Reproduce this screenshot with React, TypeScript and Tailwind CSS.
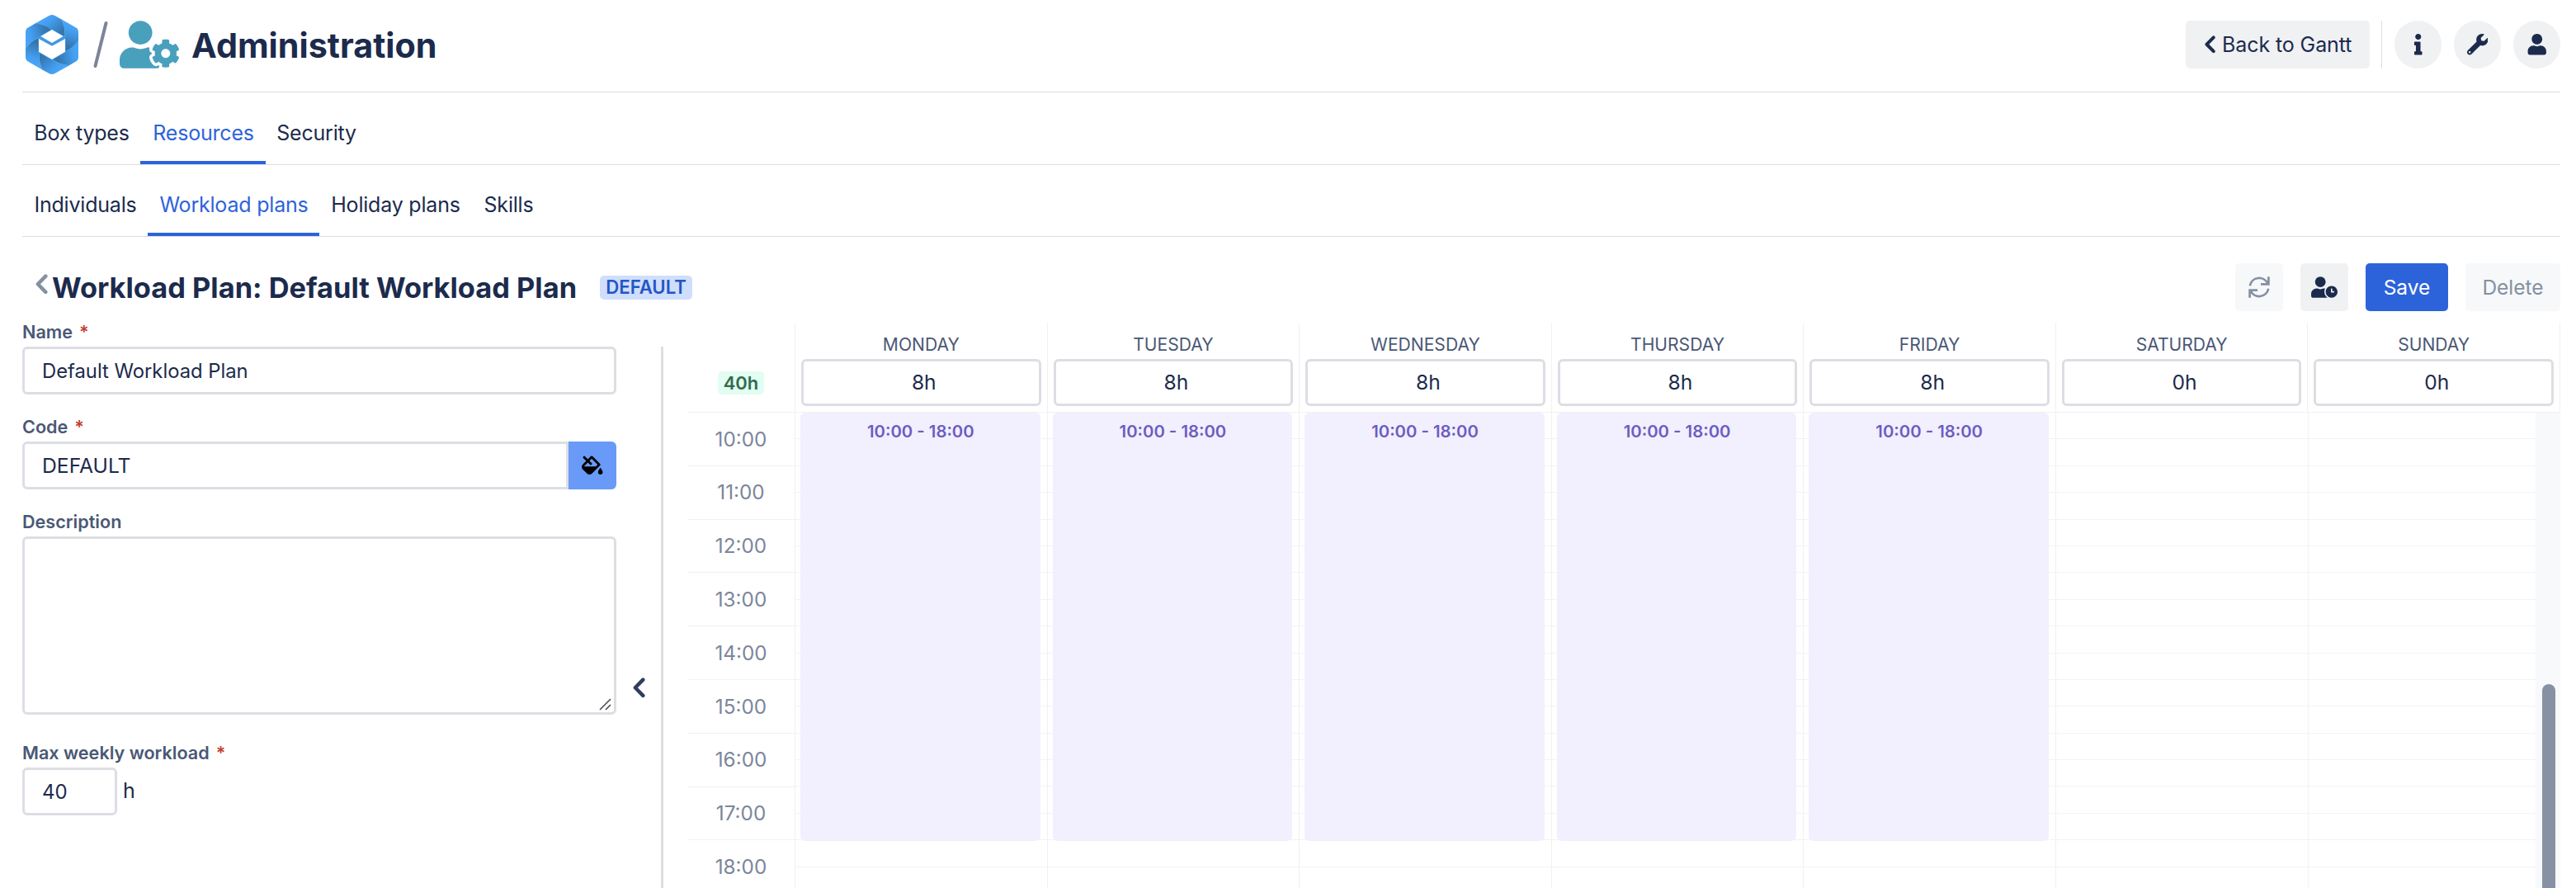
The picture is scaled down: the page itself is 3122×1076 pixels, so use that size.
import React from "react";
import { FaFillDrip, FaInfo, FaUser, FaUserClock, FaUserCog, FaWrench } from "react-icons/fa";

const DAYS = [
  { name: "MONDAY", hours: "8h", event: "10:00 - 18:00" },
  { name: "TUESDAY", hours: "8h", event: "10:00 - 18:00" },
  { name: "WEDNESDAY", hours: "8h", event: "10:00 - 18:00" },
  { name: "THURSDAY", hours: "8h", event: "10:00 - 18:00" },
  { name: "FRIDAY", hours: "8h", event: "10:00 - 18:00" },
  { name: "SATURDAY", hours: "0h", event: "" },
  { name: "SUNDAY", hours: "0h", event: "" },
];

const TIMES = ["10:00", "11:00", "12:00", "13:00", "14:00", "15:00", "16:00", "17:00", "18:00"];
const HALF_HOURS = Array.from({ length: 18 }, (_, i) => i);
const BLADES = [0, 60, 120, 180, 240, 300];

function Logo() {
  return (
    <svg width="64" height="72" viewBox="93 54 192 216" className="shrink-0">
      <defs>
        <linearGradient id="blade" gradientUnits="userSpaceOnUse" x1="165" y1="62" x2="218" y2="122">
          <stop offset="0" stopColor="#4ba6f8" />
          <stop offset="0.3" stopColor="#449dee" />
          <stop offset="1" stopColor="#3476ae" />
        </linearGradient>
        <clipPath id="hex">
          <path d="M178 57 Q189 51 200 57 L276 100 Q285 106 285 117 L285 207 Q285 218 276 224 L200 267 Q189 273 178 267 L102 224 Q93 218 93 207 L93 117 Q93 106 102 100 Z" />
        </clipPath>
      </defs>
      <g clipPath="url(#hex)">
        {BLADES.map((a) => (
          <path
            key={a}
            transform={`rotate(${a} 189 162)`}
            d="M124 86 L189 50 L224 70 Q239 98 236 135 L189 108 Q160 88 124 86 Z"
            fill="url(#blade)"
            stroke="#5fa9e6"
            strokeWidth="1"
          />
        ))}
      </g>
      <path d="M189 106 L239 134 L239 190 L189 218 L139 190 L139 134 Z" fill="#4198e4" />
      <path d="M189 108 L230 132 L189 156 L148 132 Z" fill="#fff" />
      <path d="M141 141 L189 167 L237 141 L237 188 L189 216 L141 188 Z" fill="#fff" />
    </svg>
  );
}

function ChevronLeft({ className }: { className: string }) {
  return (
    <svg viewBox="0 0 15 25" fill="none" className={className} stroke="currentColor" strokeWidth="4.6" strokeLinecap="round" strokeLinejoin="round">
      <path d="M12.4 2.7 L2.8 12.5 L12.4 22.3" />
    </svg>
  );
}

function RefreshIcon() {
  return (
    <svg width="26" height="26" viewBox="0 0 26 26" fill="none" stroke="#8590a2" strokeWidth="2.7">
      <path d="M1.8 11.2 A11.4 11.4 0 0 1 23.4 8.6" />
      <path d="M24.4 0.2 V9.4 H15" />
      <path d="M24.2 14.8 A11.4 11.4 0 0 1 2.6 17.4" />
      <path d="M1.6 25.8 V16.6 H11" />
    </svg>
  );
}

function Tab({ label, width, active }: { label: string; width: string; active?: boolean }) {
  return (
    <div
      className={`flex h-full items-center justify-center border-b-4 pt-[16px] pl-px text-[25px] tracking-[-0.2px] whitespace-nowrap ${width} ${
        active ? "border-[#2d63da] text-[#2d63da]" : "border-transparent"
      }`}
    >
      {label}
    </div>
  );
}

function Label({ children, required }: { children: string; required?: boolean }) {
  return (
    <div className="flex h-[36px] items-center gap-[8px] text-[21.6px] leading-[34px] font-semibold text-[#4a5875]">
      <span className="-mt-px">{children}</span>
      {required && <span className="text-[#c0402f]">*</span>}
    </div>
  );
}

function CircleButton({ children }: { children: React.ReactNode }) {
  return (
    <button className="flex h-[58px] w-[57px] items-center justify-center rounded-full bg-[#f0f1f3] text-[25.5px]">
      {children}
    </button>
  );
}

function Header() {
  return (
    <header className="flex h-[112px] items-start justify-between border-b border-[#dcdde1]">
      <div className="flex h-[108px] items-center pl-[4px]">
        <Logo />
        <svg width="20" height="58" viewBox="0 0 20 58" className="ml-[17px] shrink-0">
          <path d="M16.5 3 L3.5 55" stroke="#7c849a" strokeWidth="4" strokeLinecap="round" />
        </svg>
        <FaUserCog className="ml-[13px] h-[58px] w-[72px] text-[#49a0bc]" />
        <h1 className="ml-[15px] pt-[3px] text-[41.3px] font-bold whitespace-nowrap">Administration</h1>
      </div>
      <div className="flex items-center pt-[25px]">
        <button className="flex h-[58px] w-[223px] items-center rounded-[5px] bg-[#f0f1f3] pl-[23px] text-[25px] tracking-[-0.1px] whitespace-nowrap">
          <ChevronLeft className="mr-[8px] h-[21.5px] w-[13px]" />
          <span className="pt-px">Back to Gantt</span>
        </button>
        <div className="mr-[15px] ml-[14px] h-[58px] w-px bg-[#dcdde1]" />
        <div className="flex gap-[15px]">
          <CircleButton>
            <FaInfo />
          </CircleButton>
          <CircleButton>
            <FaWrench />
          </CircleButton>
          <CircleButton>
            <FaUser />
          </CircleButton>
        </div>
      </div>
    </header>
  );
}

function DetailsForm() {
  return (
    <div className="flex w-[720px] shrink-0 flex-col">
      <Label required>Name</Label>
      <div className="flex h-[58px] items-center rounded-[6px] border-3 border-[#dddee4] pt-px pl-[21px] text-[23.8px]">
        Default Workload Plan
      </div>

      <div className="mt-[21px]">
        <Label required>Code</Label>
      </div>
      <div className="flex h-[58px]">
        <div className="flex flex-1 items-center rounded-l-[6px] border-3 border-[#dddee4] pt-px pl-[21px] text-[24.7px]">
          DEFAULT
        </div>
        <button className="flex w-[58px] items-center justify-center rounded-r-[6px] bg-[#699af7] text-[25.5px] text-black">
          <FaFillDrip />
        </button>
      </div>

      <div className="mt-[21px]">
        <Label>Description</Label>
      </div>
      <div className="flex h-[216px] items-end justify-end rounded-[6px] border-3 border-[#dddee4]">
        <svg width="18" height="18" viewBox="0 0 18 18" className="mr-px">
          <path d="M2 15 L15 2 M9 15 L15 9" stroke="#4c4c4c" strokeWidth="1.6" />
        </svg>
      </div>

      <div className="mt-[28px]">
        <Label required>Max weekly workload</Label>
      </div>
      <div className="flex h-[58px] items-center gap-[7px]">
        <div className="flex h-[58px] w-[115px] items-center rounded-[6px] border-3 border-[#dddee4] pt-px pl-[21px] text-[24px]">
          40
        </div>
        <span className="text-[25px]">h</span>
      </div>
    </div>
  );
}

function Schedule() {
  return (
    <div className="mt-[7px] ml-[29px] flex h-[692px] w-[2270px] flex-col overflow-hidden">
      <div className="flex h-[109px] shrink-0 border-b border-[#f1f1f3]">
        <div className="flex w-[130px] justify-center pt-[59px]">
          <span className="flex h-[28px] w-[56px] items-center justify-center rounded-[5px] bg-[#e2fdf1] text-[22px] font-semibold text-[#326b50]">
            40h
          </span>
        </div>
        <div className="grid flex-1 grid-cols-7 border-r border-[#f1f1f3]">
          {DAYS.map((d) => (
            <div key={d.name} className="flex flex-col border-l border-[#f1f1f3] px-[7px] pt-[10px]">
              <div className="flex h-[34px] items-center justify-center text-[21.1px] text-[#4a5875]">{d.name}</div>
              <div className="flex h-[57px] items-center justify-center rounded-[6px] border-3 border-[#dddee4] pl-[7px] text-[24.6px]">
                {d.hours}
              </div>
            </div>
          ))}
        </div>
      </div>

      <div className="flex flex-1 overflow-hidden">
        <div className="flex w-[130px] shrink-0 flex-col">
          {TIMES.map((t) => (
            <div
              key={t}
              className="flex h-[64.8px] shrink-0 items-center justify-center border-b border-[#f1f1f3] text-[24.3px] text-[#7c869a]"
            >
              {t}
            </div>
          ))}
        </div>
        <div className="flex w-[2110px]">
          {DAYS.map((d) => (
            <div
              key={d.name}
              className="relative h-[600px] w-[305.6px] shrink-0 border-l border-[#f1f1f3] last:w-[276px]"
            >
              {HALF_HOURS.map((i) => (
                <div key={i} className="h-[32.4px] border-b border-[#f3f3f4]" />
              ))}
              {d.event && (
                <div className="absolute top-0 right-[8px] left-[6px] h-[519px] rounded-[6px] bg-[#f2effe] pt-[9px] pl-px text-center text-[20.3px] leading-[28px] font-semibold text-[#6b5dc0]">
                  {d.event}
                </div>
              )}
            </div>
          ))}
        </div>
        <div className="flex w-[30px] shrink-0 justify-center bg-[#f7f9fa] pt-[329px]">
          <div className="ml-px h-[400px] w-[16px] rounded-full bg-[#8691a3]" />
        </div>
      </div>
    </div>
  );
}

export default function App() {
  return (
    <div className="h-[1076px] w-[3122px] overflow-hidden bg-white pr-[19px] pl-[27px] font-['Inter',sans-serif] text-[#1c2b4d]">
      <Header />
      <nav className="flex h-[88px] border-b border-[#dcdde1]">
        <Tab label="Box types" width="w-[143px]" />
        <Tab label="Resources" width="w-[152px]" active />
        <Tab label="Security" width="w-[122px]" />
      </nav>
      <nav className="flex h-[87px] border-b border-[#dcdde1]">
        <Tab label="Individuals" width="w-[152px]" />
        <Tab label="Workload plans" width="w-[208px]" active />
        <Tab label="Holiday plans" width="w-[184px]" />
        <Tab label="Skills" width="w-[90px]" />
      </nav>

      <div className="flex h-[97px] justify-between pt-[32px]">
        <div className="flex h-[58px] items-center">
          <ChevronLeft className="mb-[8px] ml-[16px] h-[24.5px] w-[15px] text-[#8590a2]" />
          <h2 className="ml-[5px] w-[638px] pt-[2px] text-[34.4px] font-bold whitespace-nowrap">
            Workload Plan: Default Workload Plan
          </h2>
          <span className="ml-[26px] flex h-[29px] w-[112px] items-center justify-center rounded-[5px] bg-[#cfdefc] text-[22.2px] font-semibold text-[#2456c5]">
            DEFAULT
          </span>
        </div>
        <div className="flex h-[58px] gap-[21px] text-[24.5px]">
          <button className="flex w-[58px] items-center justify-center rounded-[5px] bg-[#f7f8fa]">
            <RefreshIcon />
          </button>
          <button className="flex w-[58px] items-center justify-center rounded-[5px] bg-[#f0f1f3]">
            <FaUserClock className="h-[26px] w-[32px]" />
          </button>
          <button className="flex w-[100px] items-center justify-center rounded-[5px] bg-[#2d63da] text-white">
            Save
          </button>
          <button className="flex w-[115px] items-center justify-center rounded-[5px] bg-[#f7f8fa] text-[#8590a2]">
            Delete
          </button>
        </div>
      </div>

      <main className="flex h-[692px]">
        <DetailsForm />
        <div className="flex w-[54px] shrink-0 pt-[437px] pl-[20px]">
          <ChevronLeft className="h-[24.5px] w-[15px] text-[#2f3e60]" />
        </div>
        <div className="mt-[36px] h-[656px] w-[3px] shrink-0 bg-[#dddee4]" />
        <Schedule />
      </main>
    </div>
  );
}
